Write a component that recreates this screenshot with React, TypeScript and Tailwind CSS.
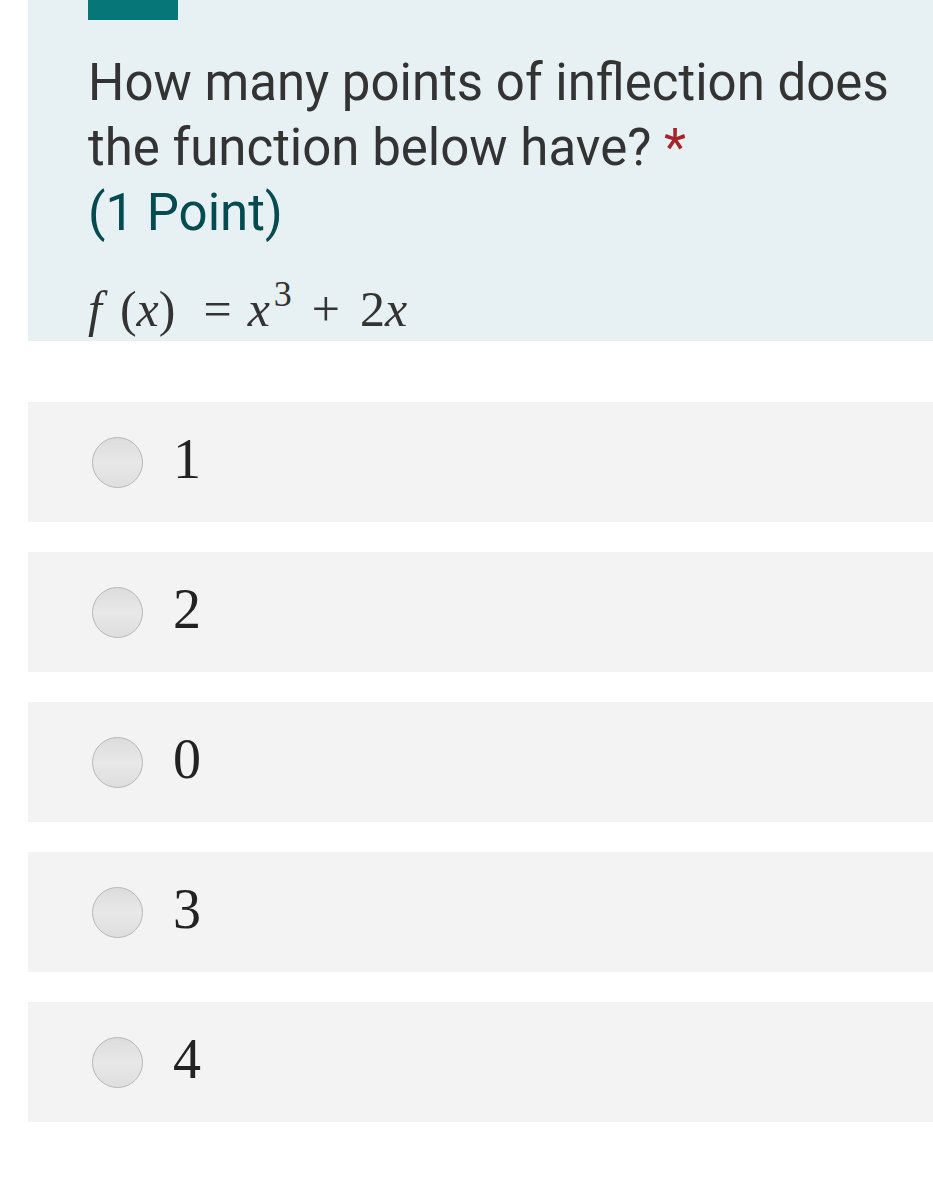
import React from 'react';

const options = ['1', '2', '0', '3', '4'];

export default function App() {
  return (
    <div className="w-[933px] h-[1202px] bg-white">
      <div className="ml-[28px] bg-[#e7f0f3] h-[341px] pl-[60px]">
        <div className="w-[90px] h-[20px] bg-[#077679]" />
        <div className="pt-[30px] text-[51px] leading-[65px] text-[#333333] font-['Roboto',sans-serif]">
          <p>How many points of inflection does</p>
          <p>
            the function below have? <span className="text-[#a4262c]">*</span>
          </p>
          <p className="text-[#004b50]">(1 Point)</p>
        </div>
        <div className="mt-[36px] flex items-baseline text-[50px] leading-[56px] text-[#333333] font-['Liberation_Serif',serif]">
          <i>f</i>
          <span className="ml-[18px]">(</span>
          <i>x</i>
          <span>)</span>
          <span className="ml-[28px]">=</span>
          <i className="ml-[16px]">x</i>
          <span className="text-[36px] relative top-[-20px] ml-[4px]">3</span>
          <span className="ml-[20px]">+</span>
          <span className="ml-[20px]">2</span>
          <i>x</i>
        </div>
      </div>
      <div className="mt-[61px] flex flex-col gap-[30px]">
        {options.map((opt) => (
          <div key={opt} className="ml-[28px] h-[120px] bg-[#f3f3f3] flex items-center pl-[64px]">
            <div className="w-[51px] h-[51px] rounded-full border border-[#b7b7b7] bg-gradient-to-b from-[#dcdcdc] via-[#e8e8e8] to-[#dedede]" />
            <span className="ml-[30px] mt-[-6px] text-[56px] text-[#222222] font-['Liberation_Serif',serif] leading-none">
              {opt}
            </span>
          </div>
        ))}
      </div>
    </div>
  );
}
